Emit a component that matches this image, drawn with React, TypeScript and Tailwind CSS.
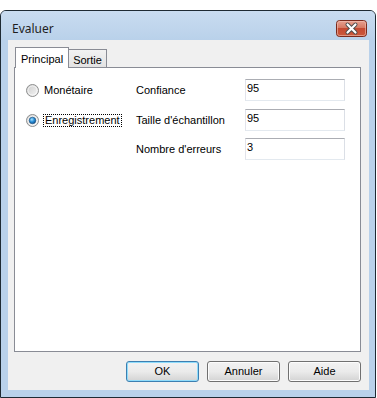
import React from "react";

function CloseBtn() {
  return (
    <svg width="31" height="17" viewBox="0 0 31 17">
      <defs>
        <linearGradient id="cg" x1="0" y1="0" x2="0" y2="1">
          <stop offset="0" stopColor="#e8a393" />
          <stop offset="0.45" stopColor="#d77a64" />
          <stop offset="0.5" stopColor="#c54a32" />
          <stop offset="1" stopColor="#cc5a3c" />
        </linearGradient>
      </defs>
      <rect x="0.5" y="0.5" width="30" height="16" rx="3" fill="url(#cg)" stroke="#7a2a1c" />
      <rect x="1.5" y="1.5" width="28" height="14" rx="2" fill="none" stroke="#f2c2b4" strokeOpacity="0.6" />
      <path d="M11.5 4.5 L19.5 12.5 M19.5 4.5 L11.5 12.5" stroke="#4a4a4a" strokeWidth="4" strokeLinecap="round" />
      <path d="M11.5 4.5 L19.5 12.5 M19.5 4.5 L11.5 12.5" stroke="#ffffff" strokeWidth="2.2" strokeLinecap="round" />
    </svg>
  );
}

function Radio({ checked }: { checked?: boolean }) {
  return (
    <svg width="13" height="13" viewBox="0 0 13 13">
      <defs>
        <linearGradient id={checked ? "rgc" : "rgu"} x1="0" y1="0" x2="1" y2="1">
          <stop offset="0" stopColor="#cbcbcb" />
          <stop offset="1" stopColor="#f7f7f7" />
        </linearGradient>
        <radialGradient id="dot" cx="0.4" cy="0.35" r="0.7">
          <stop offset="0" stopColor="#a8e2ff" />
          <stop offset="0.5" stopColor="#2a8fd8" />
          <stop offset="1" stopColor="#0a4e8c" />
        </radialGradient>
      </defs>
      <circle cx="6.5" cy="6.5" r="6" fill={`url(#${checked ? "rgc" : "rgu"})`} stroke="#8e8f8f" />
      <circle cx="6.5" cy="6.5" r="4.5" fill="none" stroke="#ffffff" strokeOpacity="0.6" />
      {checked && <circle cx="6.5" cy="6.5" r="3.3" fill="url(#dot)" stroke="#1c5180" strokeWidth="0.6" />}
    </svg>
  );
}

function Input({ value }: { value: string }) {
  return (
    <div className="w-[100px] h-[22px] bg-white border border-[#abadb3] border-l-[#e2e3ea] border-r-[#dbdfe6] border-b-[#e3e9ef] pl-[1px] flex items-center text-[11px] leading-none pb-[3px]">
      {value}
    </div>
  );
}

function Button({ label, def }: { label: string; def?: boolean }) {
  return (
    <div
      className={
        "w-[73px] h-[21px] rounded-[3px] border flex items-center justify-center text-[11px] bg-gradient-to-b from-[#f2f2f2] via-[#ebebeb] to-[#d3d3d3] " +
        (def
          ? "border-[#3c7fb1] shadow-[inset_0_0_0_1px_#8fdcfb]"
          : "border-[#707070] shadow-[inset_0_0_0_1px_#fcfcfc]")
      }
    >
      {label}
    </div>
  );
}

export default function App() {
  return (
    <div
      className="w-[377px] h-[398px] bg-white pt-[10px] text-black"
      style={{ fontFamily: '"Liberation Sans", Arial, sans-serif' }}
    >
      <div className="w-[376px] h-[388px] border border-[#1e2a33] rounded-t-[6px] bg-[#b9d1ea] flex flex-col">
        <div className="h-[29px] flex items-start bg-gradient-to-b from-[#c9dcf0] to-[#b9d1ea] rounded-t-[5px]">
          <div
            className="pl-[11px] pt-[12px] text-[12px] leading-none text-[#1e1e1e]"
            style={{ fontFamily: '"Noto Sans", "Liberation Sans", sans-serif' }}
          >
            Evaluer
          </div>
          <div className="ml-auto mr-[8px] mt-[9px]">
            <CloseBtn />
          </div>
        </div>
        <div className="ml-[7px] mr-[6px] h-[350px] bg-[#f0f0f0] pt-[7px] pl-[6px] pr-[8px] flex flex-col">
          <div className="h-[20px] flex items-end pl-[1px] text-[11px]">
            <div className="relative z-10 -mb-px w-[54px] h-[21px] bg-white border border-b-0 border-[#898c95] flex items-start justify-center pt-[3px]">
              Principal
            </div>
            <div className="w-[38px] h-[18px] bg-gradient-to-b from-[#f2f2f2] to-[#e3e3e3] border border-l-0 border-b-0 border-[#898c95] flex items-start justify-center pt-[2px]">
              Sortie
            </div>
          </div>
          <div className="h-[285px] bg-white border border-[#898c95] pt-[11px] pl-[11px] text-[11px]">
            <div className="flex items-center h-[22px]">
              <div className="w-[110px] flex items-center">
                <Radio />
                <span className="ml-[5px]">Monétaire</span>
              </div>
              <div className="w-[109px]">Confiance</div>
              <Input value="95" />
            </div>
            <div className="flex items-center h-[22px] mt-[8px]">
              <div className="w-[110px] flex items-center">
                <Radio checked />
                <span className="ml-[4px] px-[1px] border border-dotted border-black leading-[11px]">
                  Enregistrement
                </span>
              </div>
              <div className="w-[109px]">Taille d'échantillon</div>
              <Input value="95" />
            </div>
            <div className="flex items-center h-[22px] mt-[7px]">
              <div className="w-[110px]" />
              <div className="w-[109px]">Nombre d'erreurs</div>
              <Input value="3" />
            </div>
          </div>
          <div className="mt-[9px] flex justify-end gap-[8px]">
            <Button label="OK" def />
            <Button label="Annuler" />
            <Button label="Aide" />
          </div>
        </div>
      </div>
    </div>
  );
}
